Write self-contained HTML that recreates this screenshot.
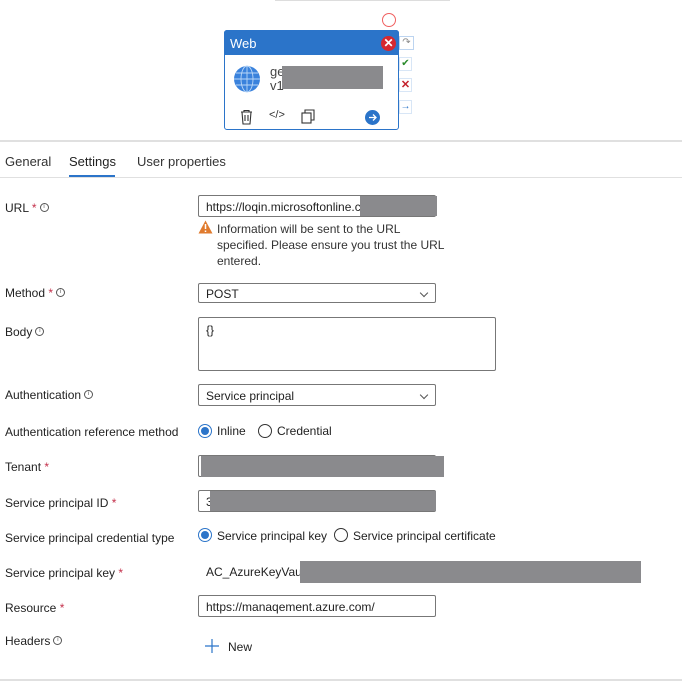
<!DOCTYPE html>
<html><head><style>
*{margin:0;padding:0;box-sizing:border-box}
body{width:682px;height:681px;background:#fff;font-family:"Liberation Sans",sans-serif;font-size:12px;color:#222;position:relative;overflow:hidden}
.a{position:absolute;white-space:nowrap}
.lbl{position:absolute;left:5px;font-size:12px;color:#222}
.req{color:#c4314b}
.info{display:inline-block;width:9px;height:9px;border:1px solid #555;border-radius:50%;font-size:6px;line-height:7px;text-align:center;vertical-align:4px;margin-left:3px;color:#555}
.inp{position:absolute;border:1px solid #777;border-radius:2px;background:#fff;padding-left:7px;padding-top:1px;font-size:12px;line-height:20px}
.gray{position:absolute;background:#8a8a8d}
.rad{position:absolute;width:14px;height:14px;border:1px solid #333;border-radius:50%}
.rad.on{border-color:#2b74c9}
.rad.on:after{content:"";position:absolute;left:2px;top:2px;width:8px;height:8px;border-radius:50%;background:#2b74c9}
.chev{position:absolute;right:8px;top:6px;width:6px;height:6px;border-right:1px solid #555;border-bottom:1px solid #555;transform:rotate(45deg)}
</style></head><body>
<div class="a" style="left:275px;top:0;width:175px;height:1px;background:#ddd"></div>
<div class="a" style="left:382px;top:13px;width:14px;height:14px;border:1.5px solid #f06060;border-radius:50%"></div>
<!-- card -->
<div class="a" style="left:224px;top:30px;width:175px;height:100px;border:1px solid #2b74c9;border-radius:3px;background:#fff"></div>
<div class="a" style="left:224px;top:30px;width:175px;height:25px;background:#2b74c9;border-radius:3px 3px 0 0"></div>
<div class="a" style="left:230px;top:36px;color:#fff;font-size:13px">Web</div>
<div class="a" style="left:381px;top:36px;width:15px;height:15px;border-radius:50%;background:#d6282f;color:#fff;font-size:12px;font-weight:bold;line-height:15px;text-align:center">✕</div>
<svg class="a" style="left:233px;top:65px" width="28" height="28" viewBox="0 0 28 28"><circle cx="14" cy="14" r="13" fill="#3a82dc"/><g fill="none" stroke="#b8d6f7" stroke-width="0.9"><ellipse cx="14" cy="14" rx="6" ry="13"/><line x1="14" y1="1" x2="14" y2="27"/><line x1="1" y1="14" x2="27" y2="14"/><path d="M3 8H25M3 20H25"/></g></svg>
<div class="a" style="left:270px;top:65px;font-size:13px;color:#444;line-height:14px">ge<br>v1</div>
<div class="gray" style="left:282px;top:66px;width:101px;height:23px"></div>
<svg class="a" style="left:239px;top:109px" width="15" height="16" viewBox="0 0 15 16"><path d="M2 3H13M5 3V1.5H10V3M3 3L4 15H11L12 3M6 6V12M9 6V12" fill="none" stroke="#333" stroke-width="1.1"/></svg>
<div class="a" style="left:269px;top:109px;font-size:11px;color:#333">&lt;/&gt;</div>
<svg class="a" style="left:301px;top:109px" width="14" height="15" viewBox="0 0 14 15"><rect x="1" y="4" width="9" height="10" fill="none" stroke="#333" stroke-width="1.1"/><path d="M4 4V1H13V11H10" fill="none" stroke="#333" stroke-width="1.1"/></svg>
<svg class="a" style="left:365px;top:110px" width="15" height="15" viewBox="0 0 15 15"><circle cx="7.5" cy="7.5" r="7.5" fill="#2b74c9"/><path d="M4 7.5H11M8 4.5L11 7.5L8 10.5" fill="none" stroke="#fff" stroke-width="1.3"/></svg>
<!-- side icons -->
<div class="a" style="left:399px;top:36px;width:15px;height:14px;border:1px solid #bcd4f0;color:#888;font-size:10px;text-align:center;line-height:12px">↷</div>
<div class="a" style="left:399px;top:57px;width:13px;height:14px;border:1px solid #d8e6f6;color:#2a8a2a;font-size:10px;text-align:center;line-height:12px">✔</div>
<div class="a" style="left:399px;top:78px;width:13px;height:14px;border:1px solid #d8e6f6;color:#c4212b;font-size:11px;font-weight:bold;text-align:center;line-height:12px">✕</div>
<div class="a" style="left:399px;top:100px;width:13px;height:14px;border:1px solid #d8e6f6;color:#2b74c9;font-size:10px;text-align:center;line-height:12px">→</div>
<!-- tabs -->
<div class="a" style="left:0;top:140px;width:682px;height:2px;background:#e0e0e0"></div>
<div class="a" style="left:5px;top:154px;font-size:13px;color:#333">General</div>
<div class="a" style="left:69px;top:154px;font-size:13px;color:#222">Settings</div>
<div class="a" style="left:69px;top:175px;width:46px;height:2px;background:#2b74c9"></div>
<div class="a" style="left:137px;top:154px;font-size:13px;color:#333">User properties</div>
<div class="a" style="left:0;top:177px;width:682px;height:1px;background:#e0e0e0"></div>
<!-- form -->
<div class="lbl" style="top:201px">URL <span class="req">*</span><span class="info">i</span></div>
<div class="inp" style="left:198px;top:195px;width:238px;height:22px">https://loqin.microsoftonline.c</div>
<div class="gray" style="left:360px;top:196px;width:77px;height:20px"></div>
<svg class="a" style="left:198px;top:220px" width="15" height="14" viewBox="0 0 15 14"><path d="M7.5 0.5L14.5 13.5H0.5Z" fill="#e07b2e"/><path d="M7.5 4V9M7.5 10.5V12" stroke="#fff" stroke-width="1.5"/></svg>
<div class="a" style="left:217px;top:221px;line-height:16px;color:#333">Information will be sent to the URL<br>specified. Please ensure you trust the URL<br>entered.</div>
<div class="lbl" style="top:286px">Method <span class="req">*</span><span class="info">i</span></div>
<div class="inp" style="left:198px;top:283px;width:238px;height:20px;line-height:18px">POST<span class="chev"></span></div>
<div class="lbl" style="top:325px">Body<span class="info">i</span></div>
<div class="inp" style="left:198px;top:317px;width:298px;height:54px;line-height:22px">{}</div>
<div class="lbl" style="top:388px">Authentication<span class="info">i</span></div>
<div class="inp" style="left:198px;top:384px;width:238px;height:22px">Service principal<span class="chev" style="top:7px"></span></div>
<div class="lbl" style="top:425px">Authentication reference method</div>
<div class="rad on" style="left:198px;top:424px"></div><div class="a" style="left:217px;top:424px">Inline</div>
<div class="rad" style="left:258px;top:424px"></div><div class="a" style="left:277px;top:424px">Credential</div>
<div class="lbl" style="top:460px">Tenant <span class="req">*</span></div>
<div class="inp" style="left:198px;top:455px;width:238px;height:22px"></div>
<div class="gray" style="left:201px;top:456px;width:243px;height:21px"></div>
<div class="lbl" style="top:496px">Service principal ID <span class="req">*</span></div>
<div class="inp" style="left:198px;top:490px;width:238px;height:22px">3</div>
<div class="gray" style="left:210px;top:491px;width:226px;height:20px"></div>
<div class="lbl" style="top:531px">Service principal credential type</div>
<div class="rad on" style="left:198px;top:528px"></div><div class="a" style="left:217px;top:529px">Service principal key</div>
<div class="rad" style="left:334px;top:528px"></div><div class="a" style="left:353px;top:529px">Service principal certificate</div>
<div class="lbl" style="top:566px">Service principal key <span class="req">*</span></div>
<div class="a" style="left:206px;top:565px">AC_AzureKeyVault</div>
<div class="gray" style="left:300px;top:561px;width:341px;height:22px"></div>
<div class="lbl" style="top:601px">Resource <span class="req">*</span></div>
<div class="inp" style="left:198px;top:595px;width:238px;height:22px">https://manaqement.azure.com/</div>
<div class="lbl" style="top:634px">Headers<span class="info">i</span></div>
<svg class="a" style="left:205px;top:639px" width="14" height="14" viewBox="0 0 14 14"><path d="M7 0V14M0 7H14" stroke="#2b74c9" stroke-width="1.2"/></svg>
<div class="a" style="left:228px;top:640px">New</div>
<div class="a" style="left:0;top:679px;width:682px;height:2px;background:#e0e0e0"></div>
</body></html>
